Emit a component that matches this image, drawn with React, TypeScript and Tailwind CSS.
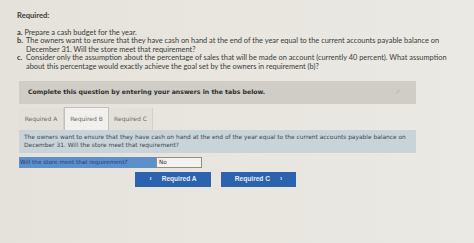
import React from 'react';

function App() {
  return (
    <div className="w-[474px] h-[243px] overflow-hidden bg-gradient-to-r from-[#e4e2da] via-[#e8e6df] to-[#ebe9e4] text-[#3a3a3a]">
      <div className="pl-[17px] pt-[11px] w-[458px] font-['Lato',sans-serif] text-[7.4px] leading-[8.6px]">
        <div className="font-bold text-[7.6px]">Required:</div>
        <div className="mt-[9px]">
          <div><b>a.</b> Prepare a cash budget for the year.</div>
          <div className="flex">
            <b className="w-[9px] shrink-0">b.</b>
            <span>The owners want to ensure that they have cash on hand at the end of the year equal to the current accounts payable balance on December 31. Will the store meet that requirement?</span>
          </div>
          <div className="flex">
            <b className="w-[9px] shrink-0">c.</b>
            <span className="pr-[8px]">Consider only the assumption about the percentage of sales that will be made on account (currently 40 percent). What assumption about this percentage would exactly achieve the goal set by the owners in requirement (b)?</span>
          </div>
        </div>
      </div>

      <div className="ml-[19px] w-[397px] font-['DejaVu_Sans',sans-serif]">
        <div className="mt-[9px] h-[23px] bg-[#cfcdc6] flex items-center pl-[9px] pr-[14px] justify-between">
          <span className="font-bold text-[6.2px] text-[#2e2e2e]">Complete this question by entering your answers in the tabs below.</span>
          <span className="text-[#b9b7b0] text-[8px]">✓</span>
        </div>

        <div className="mt-[3px] flex items-end h-[23px] text-[6px] text-[#6a6a6a]">
          <div className="w-[45px] h-[22px] flex items-center justify-center bg-[#e2e0d9] border-r border-[#d3d1ca]">Required A</div>
          <div className="w-[45px] h-[23px] flex items-center justify-center bg-[#f1f0ec] border border-b-0 border-[#c2c0ba]">Required B</div>
          <div className="w-[44px] h-[22px] flex items-center justify-center bg-[#e2e0d9] border-r border-[#d3d1ca]">Required C</div>
        </div>

        <div className="h-[23px] bg-[#c8d4d8] pl-[5px] pt-[3px] text-[5.9px] leading-[8.4px] text-[#3c4a56]">
          The owners want to ensure that they have cash on hand at the end of the year equal to the current accounts payable balance on December 31. Will the store meet that requirement?
        </div>

        <div className="mt-[4px] flex h-[11px] text-[5.7px]">
          <div className="w-[137px] bg-[#5d8fcb] text-[#223f70] flex items-center pl-[1px]">Will the store meet that requirement?</div>
          <div className="w-[46px] bg-[#f3f2ee] border border-[#8f8e8a] flex items-center pl-[2px] text-[#333]">No</div>
        </div>

        <div className="mt-[4px] flex gap-[10px] pl-[116px] font-['Liberation_Sans',sans-serif] text-[6.6px] font-bold text-[#e8eef8]">
          <div className="w-[76px] h-[15px] bg-[#2b63ae] flex items-center justify-center gap-[10px]">
            <span>‹</span>
            <span>Required A</span>
          </div>
          <div className="w-[75px] h-[15px] bg-[#2b63ae] flex items-center justify-center gap-[10px]">
            <span>Required C</span>
            <span>›</span>
          </div>
        </div>
      </div>
    </div>
  );
}

export default App;
